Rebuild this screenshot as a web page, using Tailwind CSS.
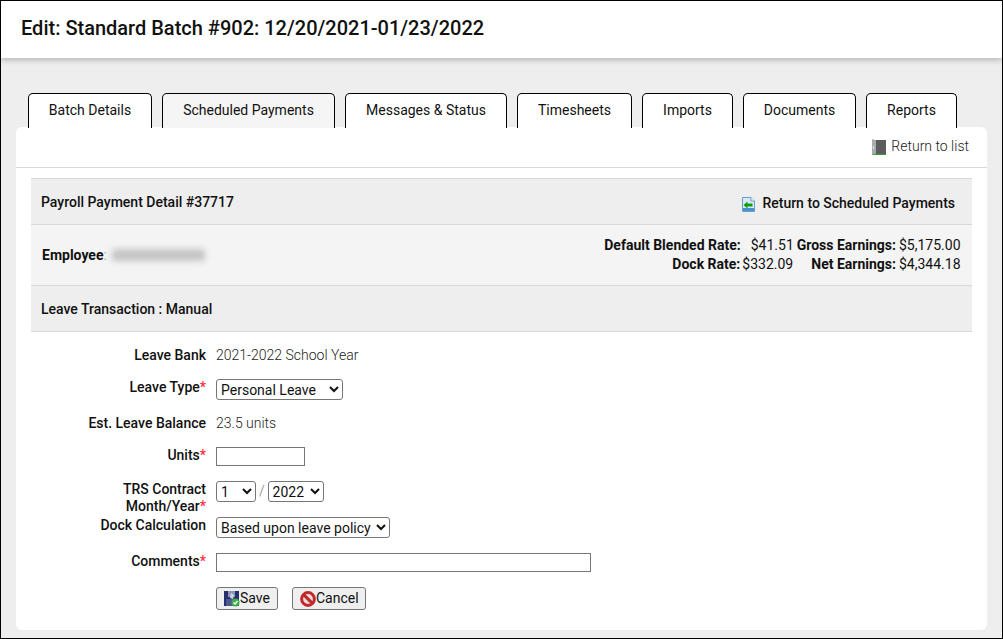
<!DOCTYPE html>
<html lang="en">
  <head>
    <meta charset="UTF-8" />
    <title>Edit: Standard Batch #902</title>
    <script src="https://cdn.jsdelivr.net/npm/@tailwindcss/browser@4"></script>
  </head>
  <body class="bg-black">
    <div class="mx-auto mt-px ml-px w-[1001px] h-[637px] overflow-hidden bg-[#eeeeee] font-['Roboto',sans-serif] text-[14px] text-[#111]">
      <!-- page title -->
      <div class="h-[57px] bg-white shadow-[0_2px_6px_rgba(0,0,0,0.25)] pl-[20px] pt-[15px]">
        <h1 class="text-[20px] leading-[25px] font-medium text-[#111]">Edit: Standard Batch #902: 12/20/2021-01/23/2022</h1>
      </div>

      <!-- tabs -->
      <div class="flex gap-[10px] pl-[27px] pt-[35px] h-[69px]">
        <a class="h-[35px] w-[124px] border border-b-0 border-black rounded-t-[5px] bg-white text-center leading-[33px] relative z-10">Batch Details</a>
        <a class="h-[35px] w-[173px] border border-b-0 border-black rounded-t-[5px] bg-[#f5f5f5] text-center leading-[33px] relative z-10">Scheduled Payments</a>
        <a class="h-[35px] w-[162px] border border-b-0 border-black rounded-t-[5px] bg-white text-center leading-[33px] relative z-10">Messages &amp; Status</a>
        <a class="h-[35px] w-[115px] border border-b-0 border-black rounded-t-[5px] bg-white text-center leading-[33px] relative z-10">Timesheets</a>
        <a class="h-[35px] w-[91px] border border-b-0 border-black rounded-t-[5px] bg-white text-center leading-[33px] relative z-10">Imports</a>
        <a class="h-[35px] w-[113px] border border-b-0 border-black rounded-t-[5px] bg-white text-center leading-[33px] relative z-10">Documents</a>
        <a class="h-[35px] w-[91px] border border-b-0 border-black rounded-t-[5px] bg-white text-center leading-[33px] relative z-10">Reports</a>
      </div>

      <!-- card -->
      <div class="ml-[15px] w-[971px] h-[503px] bg-white rounded-[6px]">
        <div class="h-[41px] border-b border-[#d8d8d8] flex items-center justify-end pr-[18px] pb-[2px] font-light text-[#222]">
          <svg class="mr-[5px] mt-[2px]" width="14" height="16" viewBox="0 0 14 16">
            <path d="M0 1 H14 V16 H0 Z" fill="#3f9a3f" />
            <rect x="4" y="1" width="10" height="14" fill="#5c5c5c" />
            <path d="M0 0 L4 1.5 V14.5 L0 16 Z" fill="#a4acb2" />
            <rect x="1" y="7" width="1" height="3" fill="#e4e4e4" />
          </svg>
          <span>Return to list</span>
        </div>

        <div class="mt-[10px] mx-[15px]">
          <div class="h-[47px] border-t border-b border-[#d8d8d8] bg-[#eeeeee] flex items-center justify-between pl-[10px] pr-[17px] pt-[1px] font-medium">
            <span>Payroll Payment Detail #37717</span>
            <span class="flex items-center pt-[3px]">
              <svg class="mr-[7px] mt-[1px]" width="13" height="15" viewBox="0 0 13 15">
                <path d="M0.5 0.5 H9 L12.5 4 V14.5 H0.5 Z" fill="#d8e8f5" stroke="#6a9ccc" />
                <path d="M9 0.5 V4 H12.5" fill="#ffffff" stroke="#6a9ccc" />
                <rect x="1" y="11" width="11" height="3" fill="#4d92d0" />
                <path d="M1.5 8 L5.5 4.5 V6.5 H10.5 V9.5 H5.5 V11.5 Z" fill="#12a012" />
              </svg>
              Return to Scheduled Payments
            </span>
          </div>
          <div class="h-[61px] border-b border-[#d8d8d8] bg-[#f4f4f4] flex items-center justify-between pl-[11px] pr-[12px]">
            <div class="flex items-center">
              <span class="font-bold">Employee</span><span class="text-[#aaa]">:</span>
              <div class="ml-[5px] h-[12px] w-[93px] bg-[#c4c4c4] rounded-[3px] blur-[3px]"></div>
            </div>
            <div class="font-medium leading-[19px]">
              <div class="flex justify-end">
                <span class="font-bold">Default Blended Rate:</span>
                <span class="w-[56px] pl-[10px] font-normal">$41.51</span>
                <span class="font-bold">Gross Earnings:</span>
                <span class="w-[64px] pl-[3px] font-normal">$5,175.00</span>
              </div>
              <div class="flex justify-end">
                <span class="font-bold">Dock Rate:</span>
                <span class="w-[71px] pl-[2px] font-normal">$332.09</span>
                <span class="font-bold">Net Earnings:</span>
                <span class="w-[64px] pl-[3px] font-normal">$4,344.18</span>
              </div>
            </div>
          </div>
          <div class="h-[46px] border-b border-[#d8d8d8] bg-[#eeeeee] flex items-center pl-[10px] pt-[1px] font-medium">Leave Transaction : Manual</div>

          <!-- form -->
          <div class="pt-[13px]">
            <div class="flex h-[34px] items-start">
              <label class="w-[175px] text-right font-medium leading-[20px]">Leave Bank</label>
              <span class="ml-[10px] leading-[20px] font-light text-[#222]">2021-2022 School Year</span>
            </div>
            <div class="flex h-[34px] items-start">
              <label class="w-[175px] text-right font-medium leading-[17px]">Leave Type<span class="text-red-500">*</span></label>
              <select class="ml-[10px] w-[127px] h-[21px] border border-[#767676] rounded-[3px] bg-white text-[14px]"><option>Personal Leave</option></select>
            </div>
            <div class="flex h-[34px] items-start">
              <label class="w-[175px] text-right font-medium leading-[20px]">Est. Leave Balance</label>
              <span class="ml-[10px] leading-[20px] font-light text-[#222]">23.5 units</span>
            </div>
            <div class="flex h-[34px] items-start">
              <label class="w-[175px] text-right font-medium leading-[17px]">Units<span class="text-red-500">*</span></label>
              <input class="ml-[10px] w-[89px] h-[19px] border border-[#767676] bg-white" type="text" />
            </div>
            <div class="flex h-[36px] items-start">
              <label class="w-[175px] text-right font-medium leading-[17px]">TRS Contract<br />Month/Year<span class="text-red-500">*</span></label>
              <div class="ml-[10px] flex items-center">
                <select class="w-[40px] h-[21px] border border-[#767676] rounded-[3px] bg-white text-[14px]"><option>1</option></select>
                <span class="mx-[3px] font-light text-[#777]">/</span>
                <select class="w-[56px] h-[21px] border border-[#767676] rounded-[3px] bg-white text-[14px]"><option>2022</option></select>
              </div>
            </div>
            <div class="flex h-[36px] items-start">
              <label class="w-[175px] text-right font-medium leading-[17px]">Dock Calculation</label>
              <select class="ml-[10px] w-[174px] h-[21px] border border-[#767676] rounded-[3px] bg-white text-[14px]"><option>Based upon leave policy</option></select>
            </div>
            <div class="flex h-[34px] items-start">
              <label class="w-[175px] text-right font-medium leading-[17px]">Comments<span class="text-red-500">*</span></label>
              <input class="ml-[10px] w-[375px] h-[19px] border border-[#767676] bg-white" type="text" />
            </div>
            <div class="flex ml-[185px] gap-[14px]">
              <button class="flex items-center h-[23px] w-[62px] pl-[7px] border border-[#767676] rounded-[3px] bg-[#efefef]">
                <svg width="16" height="16" viewBox="0 0 16 16">
                  <rect x="0" y="0" width="15" height="15" fill="#27306e" />
                  <rect x="4" y="0" width="7" height="6" fill="#8d94b8" />
                  <rect x="2" y="8" width="10" height="7" fill="#4d5a90" />
                  <path d="M7 2 L10 4 L9 8 L6 7 Z" fill="#d0d4e4" />
                  <circle cx="11.5" cy="11.5" r="4" fill="#3fae4a" />
                  <path d="M9.5 11.5 L11 13 L13.5 10" fill="none" stroke="#ffffff" stroke-width="1.3" />
                </svg>
                <span>Save</span>
              </button>
              <button class="flex items-center h-[23px] w-[74px] pl-[7px] border border-[#767676] rounded-[3px] bg-[#efefef]">
                <svg width="16" height="16" viewBox="0 0 16 16">
                  <circle cx="8" cy="8" r="6.4" fill="#e8dcdc" stroke="#c02a2c" stroke-width="3" />
                  <path d="M3.6 3.6 L12.4 12.4" stroke="#c02a2c" stroke-width="3" />
                </svg>
                <span>Cancel</span>
              </button>
            </div>
          </div>
        </div>
      </div>
    </div>
  </body>
</html>
